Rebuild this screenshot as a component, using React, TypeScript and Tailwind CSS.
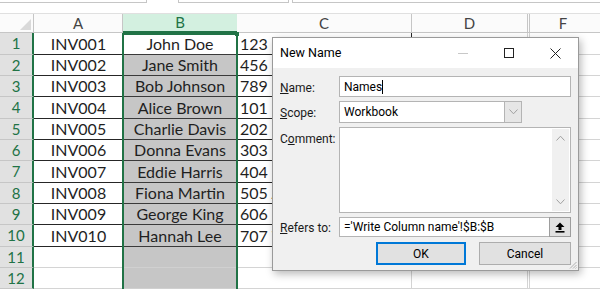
import React from 'react'

const data = [
  ['INV001', 'John Doe', '123 Elm Street'],
  ['INV002', 'Jane Smith', '456 Oak Avenue'],
  ['INV003', 'Bob Johnson', '789 Pine Road'],
  ['INV004', 'Alice Brown', '101 Maple Drive'],
  ['INV005', 'Charlie Davis', '202 Birch Lane'],
  ['INV006', 'Donna Evans', '303 Cedar Court'],
  ['INV007', 'Eddie Harris', '404 Spruce Way'],
  ['INV008', 'Fiona Martin', '505 Ash Blvd'],
  ['INV009', 'George King', '606 Fir Street'],
  ['INV010', 'Hannah Lee', '707 Willow Road'],
  ['', '', ''],
  ['', '', ''],
]

const heights = [
  'h-[22px]', 'h-[21px]', 'h-[21px]', 'h-[22px]', 'h-[21px]', 'h-[21px]',
  'h-[22px]', 'h-[21px]', 'h-[21px]', 'h-[22px]', 'h-[21px]', 'h-[21px]',
]

function Chevron({ up }: { up?: boolean }) {
  return (
    <svg width="9" height="6" viewBox="0 0 9 6" className={up ? 'rotate-180' : ''}>
      <path d="M0.5 0.5 L4.5 4.8 L8.5 0.5" fill="none" stroke="#a0a0a0" strokeWidth="1" />
    </svg>
  )
}

function NewNameDialog() {
  return (
    <div className="absolute left-[272px] top-[37px] w-[307px] h-[234px] bg-[#f0f0f0] border border-[#9a9a9a] shadow-[2px_3px_8px_rgba(0,0,0,0.28)] flex flex-col font-['Roboto',sans-serif] text-[12px] text-black">
      {/* title bar */}
      <div className="h-[30px] bg-white flex items-center shrink-0">
        <span className="flex-1 pl-[7px] text-[12.5px]">New Name</span>
        <div className="w-[46px] h-full flex items-center justify-center">
          <div className="w-[10px] h-px bg-[#c8c8c8]" />
        </div>
        <div className="w-[46px] h-full flex items-center justify-center">
          <div className="w-[10px] h-[10px] border border-[#222]" />
        </div>
        <div className="w-[46px] h-full flex items-center justify-center">
          <svg width="11" height="11" viewBox="0 0 11 11">
            <path d="M0.5 0.5 L10.5 10.5 M10.5 0.5 L0.5 10.5" stroke="#222" strokeWidth="1" />
          </svg>
        </div>
      </div>

      {/* body */}
      <div className="flex-1 flex flex-col px-[7px] pt-[8px] relative">
        <div className="flex items-start">
          <div className="w-[59px] pt-[3px] text-[#1a1a1a]">
            <span className="underline">N</span>ame:
          </div>
          <div className="flex-1 h-[21px] bg-white border border-[#b4b4b4] flex items-center pl-[4px]">
            <span>Names</span>
            <span className="w-px h-[14px] bg-black" />
          </div>
        </div>

        <div className="flex items-start mt-[4px]">
          <div className="w-[59px] pt-[3px] text-[#1a1a1a]">
            <span className="underline">S</span>cope:
          </div>
          <div className="w-[183px] h-[22px] bg-white border border-[#b4b4b4] flex items-center">
            <span className="flex-1 pl-[4px]">Workbook</span>
            <div className="w-[17px] h-full bg-[#e6e6e6] border-l border-[#b4b4b4] flex items-center justify-center">
              <Chevron />
            </div>
          </div>
        </div>

        <div className="flex items-start mt-[4px]">
          <div className="w-[59px] pt-[3px] text-[#1a1a1a]">
            C<span className="underline">o</span>mment:
          </div>
          <div className="flex-1 h-[86px] bg-white border border-[#b4b4b4] flex justify-end p-[1px]">
            <div className="w-[17px] h-full bg-[#f0f0f0] flex flex-col items-center justify-between py-[6px]">
              <Chevron up />
              <Chevron />
            </div>
          </div>
        </div>

        <div className="flex items-start mt-[4px]">
          <div className="w-[59px] pt-[2px] text-[#1a1a1a]">
            <span className="underline">R</span>efers to:
          </div>
          <div className="flex-1 h-[20px] bg-white border border-[#b4b4b4] flex items-center">
            <span className="flex-1 pl-[4px] whitespace-nowrap">='Write Column name'!$B:$B</span>
            <div className="w-[22px] h-[20px] -mr-px bg-[#e1e1e1] border border-[#9d9d9d] flex items-center justify-center">
              <svg width="10" height="11" viewBox="0 0 10 11">
                <path d="M5 0.5 L9.5 5 L6.5 5 L6.5 8 L3.5 8 L3.5 5 L0.5 5 Z" fill="#000" />
                <rect x="0.5" y="9" width="9" height="1.6" fill="#000" />
              </svg>
            </div>
          </div>
        </div>

        <div className="flex justify-end gap-[13px] mt-[5px]">
          <button className="w-[90px] h-[23px] bg-[#e1e1e1] border-2 border-[#0078d7] text-[12px]">OK</button>
          <button className="w-[92px] h-[23px] bg-[#e1e1e1] border border-[#adadad] text-[12px]">Cancel</button>
        </div>

        <svg className="absolute right-[1px] bottom-[1px]" width="8" height="8" viewBox="0 0 8 8">
          <path d="M7.5 1 L1 7.5 M7.5 4 L4 7.5 M7.5 6.5 L6.5 7.5" stroke="#b0b0b0" strokeWidth="1" />
        </svg>
      </div>
    </div>
  )
}

export default function App() {
  return (
    <div className="relative w-[600px] h-[289px] overflow-hidden bg-white font-['Lato',sans-serif]">
      {/* formula bar remnants */}
      <div className="h-[13px] flex items-start">
        <div className="w-[147px] h-[3px] border-b border-r border-[#c6c6c6]" />
        <div className="w-[31px]" />
        <div className="w-[111px] h-[3px] border-b border-x border-[#c6c6c6]" />
        <div className="w-[3px]" />
        <div className="flex-1 h-[3px] border-b border-l border-[#c6c6c6]" />
      </div>

      {/* column headers */}
      <div className="h-[20px] flex text-[15px] text-[#444] bg-[#fbfbfb] border-t border-[#e0e0e0]">
        <div className="w-[34px] border-r border-b border-[#c6c6c6] flex items-end justify-end p-[2px]">
          <div className="w-0 h-0 border-l-[11px] border-l-transparent border-b-[11px] border-b-[#d9d9d9]" />
        </div>
        <div className="w-[89px] border-r border-b border-[#c6c6c6] flex items-center justify-center">A</div>
        <div className="w-[114px] bg-[#d3f0e0] text-[#217346] border-b-2 border-[#217346] flex items-center justify-center">B</div>
        <div className="w-[175px] border-r border-b border-[#c6c6c6] flex items-center justify-center">C</div>
        <div className="w-[116px] border-r border-b border-[#c6c6c6] flex items-center justify-center">D</div>
        <div className="w-[2px] border-r border-b border-[#c6c6c6]" />
        <div className="flex-1 border-b border-[#c6c6c6] flex items-center justify-center pr-[4px]">F</div>
      </div>

      {/* rows */}
      {data.map((row, i) => {
        const filled = i < 10
        const line = filled ? 'border-[#262626]' : 'border-[#d4d4d4]'
        return (
          <div key={i} className={`flex ${heights[i]} text-[16px] text-[#1f1f1f]`}>
            <div className="w-[34px] bg-[#e1e1e1] text-[#217346] text-[15px] border-b border-[#c6c6c6] border-r-2 border-r-[#217346] flex items-center justify-center">
              {i + 1}
            </div>
            <div className={`w-[89px] border-b ${line} flex items-center justify-center`}>{row[0]}</div>
            <div
              className={`w-[114px] border-b ${filled ? 'border-[#3a3a3a]' : 'border-[#d0d0d0]'} ${
                i === 0 ? 'bg-white' : 'bg-[#c6c6c6]'
              } flex items-center justify-center`}
            >
              {row[1]}
            </div>
            <div className={`w-[175px] border-b border-r ${line} flex items-center pl-[3px] whitespace-nowrap overflow-hidden`}>
              {row[2]}
            </div>
            <div className="w-[116px] border-b border-r border-[#d4d4d4]" />
            <div className="w-[2px] border-b border-r border-[#d4d4d4]" />
            <div className="flex-1 border-b border-[#d4d4d4]" />
          </div>
        )
      })}

      {/* column B selection outline */}
      <div className="absolute left-[122px] top-[33px] w-[116px] h-[256px] border-2 border-b-0 border-[#217346]" />
      <div className="absolute left-[235px] top-[32px] w-[4px] h-[4px] bg-[#217346]" />

      <NewNameDialog />
    </div>
  )
}
